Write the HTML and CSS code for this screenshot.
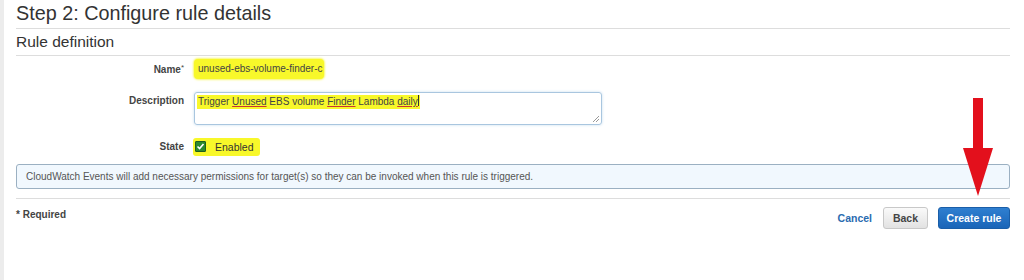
FILE: index.html
```html
<!DOCTYPE html>
<html>
<head>
<meta charset="utf-8">
<link rel="stylesheet" href="styles.css">
</head>
<body>
<div class="page">
  <div class="content">
    <h1 class="title">Step 2: Configure rule details</h1>
    <h2 class="section">Rule definition</h2>
    <div class="form">
      <div class="row row-name">
        <label class="label">Name<span class="star">*</span></label>
        <div class="field"><span class="input hl">unused-ebs-volume-finder-c</span></div>
      </div>
      <div class="row row-desc">
        <label class="label">Description</label>
        <div class="field">
          <div class="textarea"><span class="hl">Trigger <u class="sp">Unused</u> EBS volume <u class="sp">Finder</u> Lambda <u class="sp">daily</u><span class="caret"></span></span>
            <svg class="grip" width="8" height="8" viewBox="0 0 8 8"><path d="M7 1 L1 7 M7 4 L4 7" stroke="#999" stroke-width="1"/></svg>
          </div>
        </div>
      </div>
      <div class="row row-state">
        <label class="label">State</label>
        <div class="field"><span class="state hl"><span class="check"><svg width="9" height="9" viewBox="0 0 9 9"><path d="M1.5 4.5 L3.6 6.6 L7.5 2" fill="none" stroke="#fff" stroke-width="1.6"/></svg></span>Enabled</span></div>
      </div>
    </div>
    <div class="info">CloudWatch Events will add necessary permissions for target(s) so they can be invoked when this rule is triggered.</div>
    <div class="footer">
      <span class="required">* Required</span>
      <div class="actions">
        <a class="cancel">Cancel</a>
        <button class="btn back">Back</button>
        <button class="btn primary">Create rule</button>
      </div>
    </div>
  </div>
  <svg class="arrow" width="34" height="100" viewBox="0 0 34 100"><path d="M12 0 H22 V50 H32 L17 98 L2 50 H12 Z" fill="#e3101c"/></svg>
</div>
</body>
</html>
```

FILE: styles.css
```css
html, body { margin: 0; padding: 0; background: #fff; }
body { font-family: "Liberation Sans", Arial, sans-serif; color: #444; }
.page { position: relative; width: 1024px; height: 280px; border-left: 4px solid #ececec; box-sizing: border-box; }
.content { padding: 0 14px 0 12px; }
.title { margin: 0; padding-top: 1px; font-size: 19.8px; font-weight: normal; color: #333; line-height: 24px; height: 27px; border-bottom: 1px solid #ddd; }
.section { margin: 0; font-size: 15.5px; font-weight: normal; color: #333; line-height: 25px; height: 26px; border-bottom: 1px solid #ddd; }
.form { padding-top: 3px; }
.row { display: flex; align-items: flex-start; }
.label { width: 178px; text-align: right; font-size: 10px; font-weight: bold; color: #444; padding-right: 10px; box-sizing: border-box; }
.star { font-weight: normal; font-size: 8px; vertical-align: top; position: relative; top: -1px; }
.row-name .label { padding-top: 5px; }
.row-name { height: 33px; }
.input { display: inline-block; width: 130px; height: 20px; line-height: 20px; padding-left: 4px; box-sizing: border-box; font-size: 10px; color: #444; overflow: hidden; white-space: nowrap; border-radius: 4px; }
.hl { background: #ffff33; }
.input.hl { background: #f8f82a; box-shadow: 0 0 2px 1px #f8f870; }
.row-desc { height: 45px; }
.row-desc .label { padding-top: 3px; }
.textarea { position: relative; width: 408px; height: 33px; box-sizing: border-box; border: 1px solid #a9c6df; border-radius: 3px; box-shadow: 0 0 3px #c7ddef; padding: 2px 2px; font-size: 10px; line-height: 14px; }
.textarea .hl { display: inline-block; padding: 0 1px; background: #f8f82a; }
.sp { text-decoration: underline; text-decoration-color: #c33; }
.caret { display: inline-block; width: 1px; height: 11px; background: #333; vertical-align: -1px; }
.grip { position: absolute; right: 1px; bottom: 1px; }
.row-state { height: 27px; }
.row-state .label { padding-top: 4px; }
.state { display: inline-flex; align-items: center; height: 18px; width: 67px; box-sizing: border-box; padding-left: 2px; font-size: 10.5px; color: #333; background: #f8f82a; border-radius: 3px; margin-left: -1px; }
.check { display: inline-flex; align-items: center; justify-content: center; width: 9px; height: 9px; background: #2d8a2d; border: 1px solid #1e5e1e; border-radius: 1px; margin-right: 9px; }
.check svg { display: block; }
.info { height: 25px; box-sizing: border-box; border: 1px solid #9bb0c2; border-radius: 3px; background: #f1f8fe; font-size: 10px; line-height: 23px; padding-left: 9px; color: #555; }
.footer { margin-top: 9px; border-top: 1px solid #ddd; display: flex; justify-content: space-between; align-items: flex-start; padding-top: 8px; }
.required { font-size: 10px; font-weight: bold; color: #444; margin-top: 2px; }
.actions { display: flex; align-items: center; gap: 10px; }
.cancel { font-size: 10.5px; font-weight: bold; color: #2a6bb0; margin-right: 1px; }
.btn { font-family: inherit; font-size: 10.5px; font-weight: bold; height: 22px; border-radius: 3px; padding: 0 10px; cursor: pointer; }
.back { background: linear-gradient(#fafafa, #e2e2e2); border: 1px solid #c8c8c8; color: #444; width: 45px; padding: 0; }
.primary { background: linear-gradient(#2f7fd0, #1a65b8); border: 1px solid #1a5ea8; color: #fff; width: 72px; padding: 0; }
.arrow { position: absolute; left: 957px; top: 98px; }
```
